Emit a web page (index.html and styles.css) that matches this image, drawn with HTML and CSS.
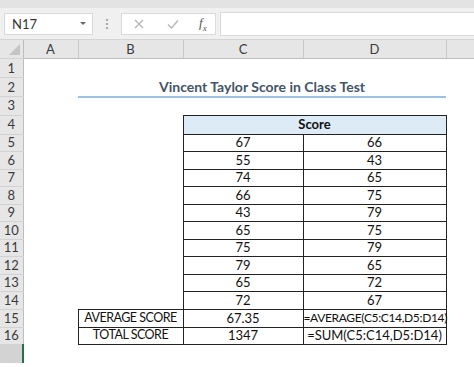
FILE: index.html
```html
<!DOCTYPE html>
<html lang="en">
<head>
    <meta charset="UTF-8">
    <meta name="viewport" content="width=device-width, initial-scale=1.0">
    <title>Vincent Taylor Score in Class Test</title>
    <link rel="stylesheet" href="styles.css">
</head>
<body>
    <div class="toolbar">
        <div class="name-box">
            <span>N17</span>
            <span class="caret"></span>
        </div>
        <div class="grip">
            <span></span><span></span><span></span>
        </div>
        <div class="fx-box">
            <svg width="12" height="12" viewBox="0 0 12 12"><path d="M2 2 L10 10 M10 2 L2 10" stroke="#b5b5b5" stroke-width="1.3" fill="none"/></svg>
            <svg width="14" height="12" viewBox="0 0 14 12"><path d="M2 6.5 L5.5 10 L12 2.5" stroke="#b5b5b5" stroke-width="1.4" fill="none"/></svg>
            <span class="fx">f<sub>x</sub></span>
        </div>
        <div class="formula-input"></div>
    </div>

    <table class="sheet">
        <colgroup>
            <col class="c-hdr">
            <col class="c-a">
            <col class="c-b">
            <col class="c-c">
            <col class="c-d">
            <col>
        </colgroup>
        <tr class="col-head">
            <th class="corner"><span class="tri"></span></th>
            <th>A</th>
            <th>B</th>
            <th>C</th>
            <th>D</th>
            <th class="last"></th>
        </tr>
        <tr class="r19"><th>1</th><td></td><td></td><td></td><td></td><td></td></tr>
        <tr class="r19"><th>2</th><td></td><td colspan="3" class="title">Vincent Taylor Score in Class Test</td><td></td></tr>
        <tr class="r18"><th>3</th><td></td><td></td><td></td><td></td><td></td></tr>
        <tr class="r19"><th>4</th><td></td><td></td><td colspan="2" class="box score-head">Score</td><td></td></tr>
        <tr class="r17"><th>5</th><td></td><td></td><td class="box">67</td><td class="box">66</td><td></td></tr>
        <tr class="r18"><th>6</th><td></td><td></td><td class="box">55</td><td class="box">43</td><td></td></tr>
        <tr class="r17"><th>7</th><td></td><td></td><td class="box">74</td><td class="box">65</td><td></td></tr>
        <tr class="r18"><th>8</th><td></td><td></td><td class="box">66</td><td class="box">75</td><td></td></tr>
        <tr class="r17"><th>9</th><td></td><td></td><td class="box">43</td><td class="box">79</td><td></td></tr>
        <tr class="r18"><th>10</th><td></td><td></td><td class="box">65</td><td class="box">75</td><td></td></tr>
        <tr class="r17"><th>11</th><td></td><td></td><td class="box">75</td><td class="box">79</td><td></td></tr>
        <tr class="r18"><th>12</th><td></td><td></td><td class="box">79</td><td class="box">65</td><td></td></tr>
        <tr class="r17"><th>13</th><td></td><td></td><td class="box">65</td><td class="box">72</td><td></td></tr>
        <tr class="r18"><th>14</th><td></td><td></td><td class="box">72</td><td class="box">67</td><td></td></tr>
        <tr class="r18"><th>15</th><td></td><td class="box label">AVERAGE SCORE</td><td class="box">67.35</td><td class="box tight">=AVERAGE(C5:C14,D5:D14)</td><td></td></tr>
        <tr class="r17"><th>16</th><td></td><td class="box label">TOTAL SCORE</td><td class="box">1347</td><td class="box">=SUM(C5:C14,D5:D14)</td><td></td></tr>
        <tr class="r19"><th class="selected"></th><td></td><td></td><td></td><td></td><td></td></tr>
    </table>
</body>
</html>
```

FILE: styles.css
```css
body {
    margin: 0;
    padding: 0;
    font-family: Lato, "Open Sans", sans-serif;
    background-color: #fff;
    overflow: hidden;
}

/* formula bar */
.toolbar {
    display: flex;
    align-items: center;
    height: 40px;
    padding: 0 0 0 4px;
    box-sizing: border-box;
    background-color: #f0f0f0;
    border-top: 8px solid #e3e3e3;
    border-bottom: 1px solid #d4d4d4;
}

.name-box {
    display: flex;
    align-items: center;
    justify-content: space-between;
    width: 89px;
    height: 22px;
    box-sizing: border-box;
    padding: 0 6px 0 7px;
    background-color: #fff;
    border: 1px solid #dadada;
    font-size: 13px;
    color: #333;
}

.caret {
    width: 0;
    height: 0;
    border-left: 3px solid transparent;
    border-right: 3px solid transparent;
    border-top: 3px solid #666;
}

.grip {
    display: flex;
    flex-direction: column;
    gap: 2px;
    width: 28px;
    align-items: center;
}

.grip span {
    width: 2px;
    height: 2px;
    background-color: #a8a8a8;
}

.fx-box {
    display: flex;
    align-items: center;
    gap: 21px;
    width: 95px;
    height: 22px;
    box-sizing: border-box;
    padding-left: 11px;
    background-color: #fff;
    border: 1px solid #dadada;
}

.fx {
    font-family: "Liberation Serif", serif;
    font-style: italic;
    font-size: 13px;
    color: #555;
    margin-left: -2px;
}

.fx sub {
    font-size: 9px;
}

.formula-input {
    flex: 1;
    height: 22px;
    margin-left: 4px;
    background-color: #fff;
    border: 1px solid #dadada;
    border-right: none;
}

/* sheet grid */
.sheet {
    width: 474px;
    table-layout: fixed;
    border-collapse: collapse;
    font-size: 13px;
    line-height: 1;
    color: #111;
}

.c-hdr { width: 23px; }
.c-a { width: 55px; }
.c-b { width: 105px; }
.c-c { width: 120px; }
.c-d { width: 143px; }

.sheet td,
.sheet th {
    padding: 0;
    text-align: center;
    white-space: nowrap;
    overflow: hidden;
}

.col-head th {
    height: 18px;
    background-color: #e6e6e6;
    border-right: 1px solid #c8c8c8;
    border-bottom: 1px solid #bdbdbd;
    font-weight: normal;
    font-size: 13px;
    color: #3a3a3a;
}

.col-head th.last {
    border-right: none;
}

.col-head th.corner {
    position: relative;
}

.tri {
    position: absolute;
    right: 3px;
    bottom: 3px;
    width: 0;
    height: 0;
    border-left: 11px solid transparent;
    border-bottom: 11px solid #c4c4c4;
}

.sheet tr > th:first-child {
    background-color: #e6e6e6;
    border-right: 1px solid #bdbdbd;
    border-bottom: 1px solid #d2d2d2;
    font-weight: normal;
    font-size: 13px;
    color: #3a3a3a;
}

.sheet tr > th.selected {
    background-color: #d3d3d3;
    border-right: 2px solid #217346;
    border-bottom: none;
}

.r19 td, .r19 th { height: 18px; }
.r18 td, .r18 th { height: 17px; }
.r17 td, .r17 th { height: 16px; }

.title {
    font-size: 14px;
    font-weight: bold;
    color: #44546a;
    border-bottom: 2px solid #9bc2e6;
}

.box {
    border: 1px solid #222;
}

.score-head {
    background-color: #ddebf7;
    font-weight: bold;
}

.label {
    font-size: 12.5px;
    letter-spacing: -0.5px;
}

.sheet td.tight {
    font-size: 12px;
    letter-spacing: -0.35px;
    overflow: visible;
}
```
